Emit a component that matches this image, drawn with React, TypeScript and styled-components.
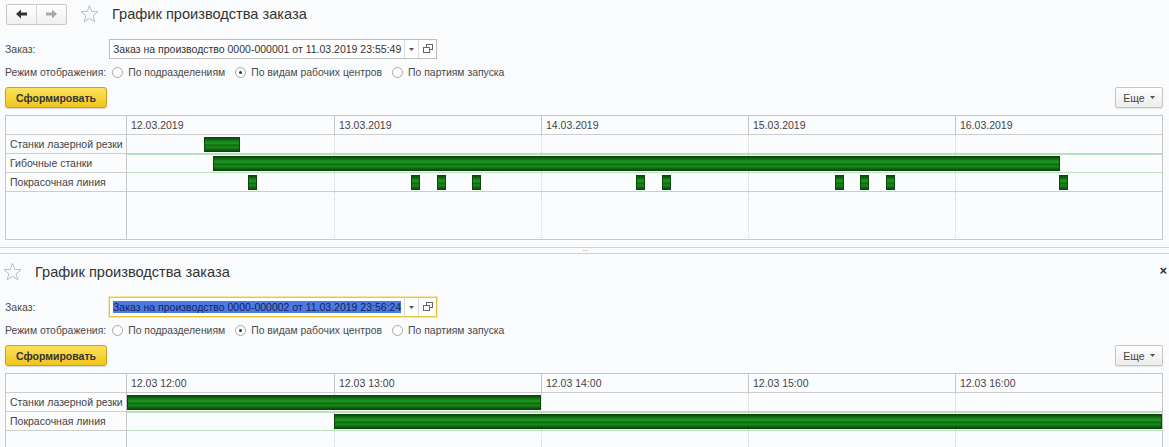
import React from 'react';
import styled, { createGlobalStyle, css } from 'styled-components';

const GlobalStyle = createGlobalStyle`
    html, body {
        margin: 0;
        padding: 0;
        background: #fafbfc;
    }
    body {
        font-family: "Liberation Sans", Arial, sans-serif;
        color: #4a4a4a;
    }
`;

// one day / one hour column of the timeline, px
const COL = 207;

interface IBar {
    left: number,
    width: number,
}

interface IGanttRow {
    name: string,
    bars: IBar[],
    highlighted?: boolean,
}

interface IGantt {
    columns: string[],
    rows: IGanttRow[],
}

const paintStarts = [121, 284, 310, 345, 509, 535, 708, 733, 759, 932];

const firstGantt: IGantt = {
    columns: ['12.03.2019', '13.03.2019', '14.03.2019', '15.03.2019', '16.03.2019'],
    rows: [
        { name: 'Станки лазерной резки', bars: [{ left: 77, width: 36 }] },
        { name: 'Гибочные станки', bars: [{ left: 86, width: 847 }], highlighted: true },
        { name: 'Покрасочная линия', bars: paintStarts.map((left) => ({ left, width: 9 })) },
    ],
};

const secondGantt: IGantt = {
    columns: ['12.03 12:00', '12.03 13:00', '12.03 14:00', '12.03 15:00', '12.03 16:00'],
    rows: [
        { name: 'Станки лазерной резки', bars: [{ left: 0, width: 414 }] },
        { name: 'Покрасочная линия', bars: [{ left: 207, width: 828 }], highlighted: true },
    ],
};

const Page = styled.div`
    width: 1169px;
    height: 447px;
    overflow: hidden;
    display: flex;
    flex-direction: column;
`;

const Panel = styled.div`
    padding: 0 6px 0 5px;
    display: flex;
    flex-direction: column;
    flex-shrink: 0;
`;

const TitleBar = styled.div`
    height: 28px;
    display: flex;
    align-items: center;
`;

const NavGroup = styled.div`
    display: flex;
    height: 19px;
    margin-left: 1px;
    border: 1px solid #c8c8c8;
    border-radius: 2px;
    background: linear-gradient(#ffffff, #f0f0f0);
`;

const NavButton = styled.div<{ $divider?: boolean }>`
    width: 29px;
    display: flex;
    align-items: center;
    justify-content: center;
    ${(p) => p.$divider && css`border-left: 1px solid #d6d6d6;`}
`;

const StarBox = styled.div<{ $offset: number }>`
    display: flex;
    margin-left: ${(p) => p.$offset}px;
`;

const Title = styled.div`
    margin-left: 13px;
    font-size: 14.6px;
    color: #333;
    padding-bottom: 1px;
`;

const CloseButton = styled.div`
    margin-left: auto;
    margin-right: -4px;
    margin-bottom: 3px;
    font-size: 13px;
    font-weight: bold;
    color: #333;
`;

const FieldRow = styled.div`
    margin-top: 11px;
    height: 20px;
    display: flex;
    align-items: center;
    font-size: 10.5px;
`;

const FieldLabel = styled.div`
    width: 104px;
`;

const Combo = styled.div<{ $focused?: boolean }>`
    width: 326px;
    height: 18px;
    display: flex;
    background: #fff;
    border: 1px solid ${(p) => (p.$focused ? '#e5c53c' : '#bdbdbd')};
    ${(p) => p.$focused && css`box-shadow: 0 0 0 1px #f6e7a6;`}
`;

const ComboText = styled.div`
    flex: 1;
    padding: 0 3px;
    overflow: hidden;
    white-space: nowrap;
    line-height: 18px;
    color: #333;
`;

const Selected = styled.span`
    background: #4b7be0;
    color: #15225c;
`;

const ComboButton = styled.div<{ $w: number }>`
    width: ${(p) => p.$w}px;
    border-left: 1px solid #dadada;
    display: flex;
    align-items: center;
    justify-content: center;
`;

const RadioRow = styled.div`
    margin-top: 5px;
    height: 17px;
    display: flex;
    align-items: center;
    font-size: 10.4px;
`;

const RadioCaption = styled.div`
    margin-right: 6px;
`;

const RadioOption = styled.div`
    display: flex;
    align-items: center;
    margin-right: 10px;
`;

const RadioCircle = styled.div<{ $checked?: boolean }>`
    width: 9px;
    height: 9px;
    border: 1px solid #a8a8a8;
    border-radius: 50%;
    background: #fff;
    margin-right: 5px;
    display: flex;
    align-items: center;
    justify-content: center;
    &::after {
        content: '';
        width: 3px;
        height: 3px;
        border-radius: 50%;
        background: ${(p) => (p.$checked ? '#333' : 'transparent')};
    }
`;

const CommandBar = styled.div`
    margin-top: 6px;
    height: 21px;
    display: flex;
    justify-content: space-between;
`;

const PrimaryButton = styled.div`
    width: 100px;
    height: 19px;
    border: 1px solid #cba11b;
    border-radius: 3px;
    background: linear-gradient(#fbe25a, #f0c51e);
    box-shadow: 0 1px 1px rgba(0, 0, 0, 0.15);
    display: flex;
    align-items: center;
    justify-content: center;
    font-size: 10.5px;
    font-weight: bold;
    color: #333;
`;

const MoreButton = styled.div`
    width: 46px;
    height: 19px;
    border: 1px solid #c6c6c6;
    border-radius: 2px;
    background: linear-gradient(#ffffff, #ececec);
    box-shadow: 0 1px 1px rgba(0, 0, 0, 0.08);
    display: flex;
    align-items: center;
    justify-content: center;
    gap: 5px;
    font-size: 10.5px;
    color: #444;
`;

const GanttTable = styled.div`
    margin-top: 7px;
    width: 1156px;
    border: 1px solid #c6c6c6;
    background: #fbfcfd;
    font-size: 10.5px;
    color: #444;
`;

const GanttRow = styled.div<{ $h: number }>`
    display: flex;
    height: ${(p) => p.$h}px;
`;

const LabelCell = styled.div<{ $line?: boolean }>`
    width: 116px;
    padding-left: 4px;
    border-right: 1px solid #c6c6c6;
    border-bottom: 1px solid ${(p) => (p.$line ? '#cdcdcd' : 'transparent')};
    line-height: 18px;
    white-space: nowrap;
    overflow: hidden;
`;

const Track = styled.div<{ $line?: boolean, $hl?: boolean }>`
    position: relative;
    flex: 1;
    display: flex;
    border-bottom: 1px solid ${(p) => (!p.$line ? 'transparent' : p.$hl ? '#bde3bd' : '#cdcdcd')};
    ${(p) => p.$hl && css`box-shadow: inset 0 1px 0 #bde3bd;`}
`;

const DayCell = styled.div<{ $first?: boolean, $header?: boolean }>`
    width: ${COL}px;
    flex-shrink: 0;
    box-sizing: border-box;
    padding-left: 4px;
    line-height: 18px;
    ${(p) => !p.$first && css`
        border-left: 1px ${p.$header ? 'solid #c6c6c6' : 'dotted #d4d4d4'};
    `}
`;

const Bar = styled.div`
    position: absolute;
    top: 2px;
    height: 15px;
    box-sizing: border-box;
    border: 1px solid #0b470b;
    background: linear-gradient(
        to bottom,
        #0a4a0a 0%,
        #15801a 25%,
        #1e9a22 40%,
        #0e6a10 55%,
        #178a1a 72%,
        #0a4a0a 100%
    );
`;

const Splitter = styled.div`
    height: 18px;
    flex-shrink: 0;
    display: flex;
    align-items: flex-start;
`;

const SplitterBar = styled.div`
    margin-top: 7px;
    width: 100%;
    height: 5px;
    border-top: 1px solid #d2d2d2;
    border-bottom: 1px solid #d2d2d2;
    display: flex;
    align-items: center;
    justify-content: center;
    font-size: 8px;
    line-height: 5px;
    color: #a0a0a0;
    letter-spacing: -1px;
`;

const StarIcon = () => (
    <svg width="19" height="19" viewBox="0 0 19 19">
        <polygon
            points="9.5,0.5 11.73,6.43 18.06,6.72 13.11,10.67 14.79,16.78 9.5,13.3 4.21,16.78 5.89,10.67 0.94,6.72 7.27,6.43"
            fill="none"
            stroke="#bdbdbd"
            strokeWidth="1"
            strokeLinejoin="round"
        />
    </svg>
);

const ArrowIcon = ({ dir, color }: { dir: 'left' | 'right', color: string }) => (
    <svg width="11" height="10" viewBox="0 0 11 10">
        <path
            d="M0 5 L5 0.5 V3.5 H11 V6.5 H5 V9.5 Z"
            fill={color}
            transform={dir === 'right' ? 'translate(11 0) scale(-1 1)' : undefined}
        />
    </svg>
);

const Caret = () => (
    <svg width="5" height="3" viewBox="0 0 5 3">
        <path d="M0 0 H5 L2.5 3 Z" fill="#555" />
    </svg>
);

const OpenIcon = () => (
    <svg width="10" height="10" viewBox="0 0 10 10">
        <rect x="3.5" y="0.5" width="6" height="5" fill="none" stroke="#666" />
        <rect x="0.5" y="3.5" width="6" height="5" fill="#fff" stroke="#666" />
    </svg>
);

const Gantt = ({ data, emptyHeight }: { data: IGantt, emptyHeight: number }) => (
    <GanttTable>
        <GanttRow $h={19}>
            <LabelCell $line />
            <Track $line>
                {data.columns.map((c, i) => (
                    <DayCell key={c} $first={i === 0} $header>{c}</DayCell>
                ))}
            </Track>
        </GanttRow>
        {data.rows.map((row) => (
            <GanttRow key={row.name} $h={19}>
                <LabelCell $line>{row.name}</LabelCell>
                <Track $line $hl={row.highlighted}>
                    {data.columns.map((c, i) => (
                        <DayCell key={c} $first={i === 0} />
                    ))}
                    {row.bars.map((b, i) => (
                        <Bar key={i} style={{ left: b.left, width: b.width }} />
                    ))}
                </Track>
            </GanttRow>
        ))}
        <GanttRow $h={emptyHeight}>
            <LabelCell />
            <Track>
                {data.columns.map((c, i) => (
                    <DayCell key={c} $first={i === 0} />
                ))}
            </Track>
        </GanttRow>
    </GanttTable>
);

const OrderForm = ({
    orderText,
    focused,
    gantt,
}: {
    orderText: string,
    focused?: boolean,
    gantt: IGantt,
}) => (
    <>
        <FieldRow>
            <FieldLabel>Заказ:</FieldLabel>
            <Combo $focused={focused}>
                <ComboText>{focused ? <Selected>{orderText}</Selected> : orderText}</ComboText>
                <ComboButton $w={13}><Caret /></ComboButton>
                <ComboButton $w={17}><OpenIcon /></ComboButton>
            </Combo>
        </FieldRow>
        <RadioRow>
            <RadioCaption>Режим отображения:</RadioCaption>
            <RadioOption><RadioCircle />По подразделениям</RadioOption>
            <RadioOption><RadioCircle $checked />По видам рабочих центров</RadioOption>
            <RadioOption><RadioCircle />По партиям запуска</RadioOption>
        </RadioRow>
        <CommandBar>
            <PrimaryButton>Сформировать</PrimaryButton>
            <MoreButton>Еще <Caret /></MoreButton>
        </CommandBar>
        <Gantt data={gantt} emptyHeight={47} />
    </>
);

export default function App() {
    return (
        <Page>
            <GlobalStyle />
            <Panel>
                <TitleBar>
                    <NavGroup>
                        <NavButton><ArrowIcon dir="left" color="#333" /></NavButton>
                        <NavButton $divider><ArrowIcon dir="right" color="#a8a8a8" /></NavButton>
                    </NavGroup>
                    <StarBox $offset={13}><StarIcon /></StarBox>
                    <Title>График производства заказа</Title>
                </TitleBar>
                <OrderForm
                    orderText="Заказ на производство 0000-000001 от 11.03.2019 23:55:49"
                    gantt={firstGantt}
                />
            </Panel>
            <Splitter>
                <SplitterBar>···</SplitterBar>
            </Splitter>
            <Panel>
                <TitleBar>
                    <StarBox $offset={-2}><StarIcon /></StarBox>
                    <Title>График производства заказа</Title>
                    <CloseButton>×</CloseButton>
                </TitleBar>
                <OrderForm
                    orderText="Заказ на производство 0000-000002 от 11.03.2019 23:56:24"
                    focused
                    gantt={secondGantt}
                />
            </Panel>
        </Page>
    );
}
